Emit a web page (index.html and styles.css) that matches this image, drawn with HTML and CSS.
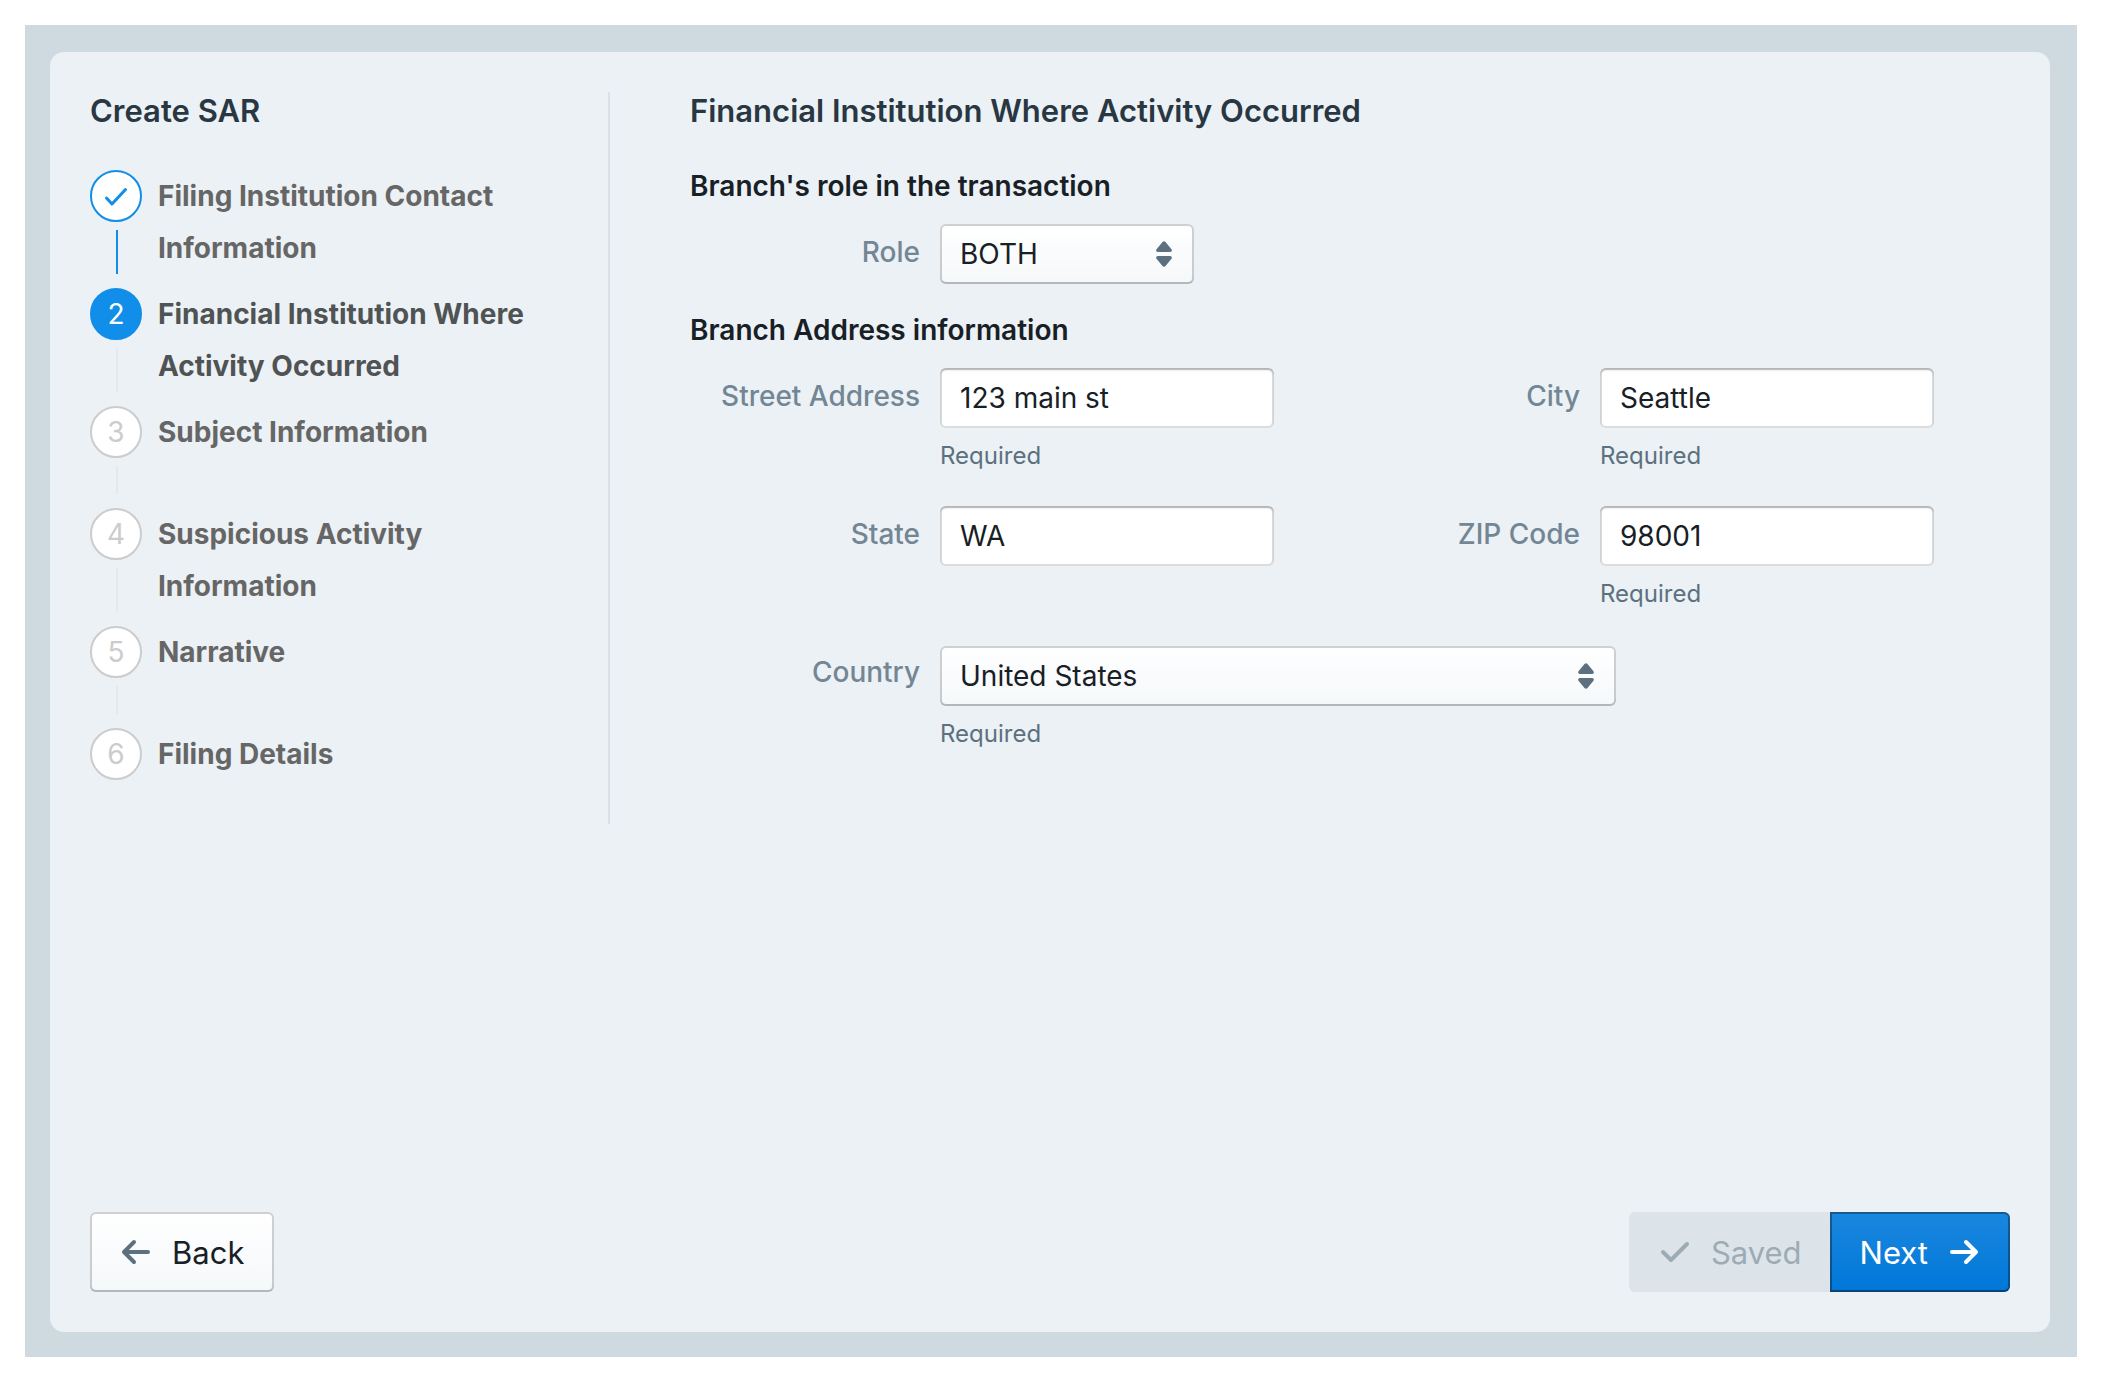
FILE: index.html
```html
<!DOCTYPE html>
<html lang="en">
<head>
<meta charset="utf-8">
<title>Create SAR</title>
<link rel="stylesheet" href="styles.css">
</head>
<body>
<div class="frame">
	<form class="panel">
		<div class="content">
			<aside class="sidebar">
				<h1 class="title">Create SAR</h1>
				<ol class="steps">
					<li class="step done">
						<span class="step-icon">
							<svg width="24" height="24" viewBox="0 0 24 24"><path d="M2.500 14l5.500 6L21.500 5.500"/></svg>
						</span>
						<span class="step-label">Filing Institution Contact Information</span>
					</li>
					<li class="step active">
						<span class="step-icon">2</span>
						<span class="step-label">Financial Institution Where Activity Occurred</span>
					</li>
					<li class="step">
						<span class="step-icon">3</span>
						<span class="step-label">Subject Information</span>
					</li>
					<li class="step">
						<span class="step-icon">4</span>
						<span class="step-label">Suspicious Activity Information</span>
					</li>
					<li class="step">
						<span class="step-icon">5</span>
						<span class="step-label">Narrative</span>
					</li>
					<li class="step">
						<span class="step-icon">6</span>
						<span class="step-label">Filing Details</span>
					</li>
				</ol>
			</aside>
			<main class="main">
				<h2 class="title">Financial Institution Where Activity Occurred</h2>
				<h3 class="subtitle">Branch's role in the transaction</h3>
				<div class="fields">
					<div class="field">
						<label for="role">Role</label>
						<div class="control">
							<div class="select role">
								<select id="role">
									<option>BOTH</option>
								</select>
								<svg width="32" height="32" viewBox="0 0 32 32"><path d="M10 14h12c1.600 0 2.400-1.600 1.500-2.800l-6-7.200c-.8-1-2.200-1-3 0l-6 7.200C7.600 12.400 8.400 14 10 14zM10 18h12c1.600 0 2.400 1.600 1.500 2.800l-6 7.200c-.8 1-2.200 1-3 0l-6-7.200C7.600 19.600 8.400 18 10 18z"/></svg>
							</div>
						</div>
					</div>
				</div>
				<h3 class="subtitle">Branch Address information</h3>
				<div class="fields">
					<div class="field">
						<label for="street">Street Address</label>
						<div class="control">
							<input type="text" id="street" value="123 main st">
							<p class="helper">Required</p>
						</div>
					</div>
					<div class="field">
						<label for="city">City</label>
						<div class="control">
							<input type="text" id="city" value="Seattle">
							<p class="helper">Required</p>
						</div>
					</div>
					<div class="field">
						<label for="state">State</label>
						<div class="control">
							<input type="text" id="state" value="WA">
						</div>
					</div>
					<div class="field">
						<label for="zip">ZIP Code</label>
						<div class="control">
							<input type="text" id="zip" value="98001">
							<p class="helper">Required</p>
						</div>
					</div>
					<div class="field wide">
						<label for="country">Country</label>
						<div class="control">
							<div class="select country">
								<select id="country">
									<option>United States</option>
								</select>
								<svg width="32" height="32" viewBox="0 0 32 32"><path d="M10 14h12c1.600 0 2.400-1.600 1.500-2.800l-6-7.200c-.8-1-2.200-1-3 0l-6 7.200C7.600 12.400 8.400 14 10 14zM10 18h12c1.600 0 2.400 1.600 1.500 2.800l-6 7.200c-.8 1-2.200 1-3 0l-6-7.200C7.600 19.600 8.400 18 10 18z"/></svg>
							</div>
							<p class="helper">Required</p>
						</div>
					</div>
				</div>
			</main>
		</div>
		<footer class="footer">
			<button type="button" class="btn">
				<svg width="32" height="32" viewBox="0 0 32 32"><path d="M28 16H5M14 6L4 16l10 10"/></svg>
				Back
			</button>
			<div class="btn-group">
				<button type="button" class="btn" disabled>
					<svg width="32" height="32" viewBox="0 0 32 32"><path d="M4 16l8 8L28 8"/></svg>
					Saved
				</button>
				<button type="submit" class="btn primary">
					Next
					<svg width="32" height="32" viewBox="0 0 32 32"><path d="M4 16h23M18 6l10 10-10 10"/></svg>
				</button>
			</div>
		</footer>
	</form>
</div>
</body>
</html>
```
FILE: styles.css
```css
* {
	box-sizing: border-box;
	margin: 0;
	padding: 0;
}
body {
	display: flex;
	min-height: 100vh;
	padding: 25px;
	background: #fff;
	color: #182026;
	font-family: Inter, "Liberation Sans", sans-serif;
	font-size: 28px;
}
.frame {
	display: flex;
	flex: 1;
	padding: 27px 27px 25px 25px;
	background: #ced9e0;
}
.panel {
	display: flex;
	flex: 1;
	flex-direction: column;
	justify-content: space-between;
	padding: 40px;
	border-radius: 14px;
	background: #ebf1f5;
}
.content {
	display: flex;
	align-items: flex-start;
}
.title {
	margin-bottom: 38px;
	color: #293742;
	font-size: 31px;
	font-weight: 600;
	line-height: 38px;
}

/* steps */
.sidebar {
	flex: none;
	width: 520px;
	padding: 0 70px 8px 0;
	border-right: 2px solid #d8e1e8;
}
.sidebar .title {
	margin-bottom: 40px;
}
.steps {
	display: grid;
	gap: 14px;
	list-style: none;
}
.step {
	position: relative;
	display: flex;
	gap: 16px;
	min-height: 88px;
	color: #666;
	line-height: 52px;
}
.step:not(:last-child)::after {
	content: "";
	position: absolute;
	top: 60px;
	bottom: 0;
	left: 26px;
	width: 2px;
	background: #e8e8e8;
}
.step-icon {
	display: flex;
	flex: none;
	align-items: center;
	justify-content: center;
	width: 52px;
	height: 52px;
	border: 2px solid #ccc;
	border-radius: 50%;
	background: #fff;
	color: #ccc;
}
.step-icon svg {
	fill: none;
	stroke: #108ee9;
	stroke-width: 3;
	stroke-linecap: round;
	stroke-linejoin: round;
}
.step-label {
	font-weight: 700;
}
.step.done .step-icon {
	border-color: #108ee9;
}
.step.done::after {
	background: #108ee9;
}
.step.active {
	color: #505354;
}
.step.active .step-icon {
	border-color: #108ee9;
	background: #108ee9;
	color: #fff;
}

/* form */
.main {
	flex: 1;
	padding-left: 80px;
}
.subtitle {
	margin-bottom: 20px;
	font-size: 28px;
	font-weight: 600;
	line-height: 36px;
}
.fields {
	display: grid;
	grid-template-columns: 1fr 1fr;
	row-gap: 32px;
	margin-bottom: 28px;
}
.field {
	display: flex;
	gap: 20px;
}
.field.wide {
	grid-column: 1 / -1;
}
.field label {
	flex: none;
	width: 230px;
	color: #738694;
	font-weight: 500;
	line-height: 56px;
	text-align: right;
}
.field input,
.field select {
	display: block;
	width: 334px;
	height: 60px;
	padding: 0 20px;
	border: 0;
	border-radius: 6px;
	color: #182026;
	font: inherit;
}
.field input {
	background: #fff;
	box-shadow: inset 0 0 0 2px rgba(16, 22, 26, .15), inset 0 2px 2px rgba(16, 22, 26, .2);
}
.select {
	position: relative;
}
.select.role {
	width: 254px;
}
.select.country {
	width: 676px;
	margin-top: 2px;
}
.field select {
	width: 100%;
	appearance: none;
}
.field select,
.btn {
	background: linear-gradient(#fff, #f5f8fa);
	box-shadow: inset 0 0 0 2px rgba(16, 22, 26, .2), inset 0 -2px 0 rgba(16, 22, 26, .1);
}
.select svg {
	position: absolute;
	top: 14px;
	right: 14px;
	fill: #5c7080;
	pointer-events: none;
}
.helper {
	margin-top: 10px;
	color: #5c7080;
	font-size: 24px;
	line-height: 36px;
}

/* buttons */
.footer {
	display: flex;
	justify-content: space-between;
}
.btn-group {
	display: flex;
}
.btn-group .btn:not(:last-child) {
	margin-right: -2px;
}
.btn {
	display: flex;
	align-items: center;
	gap: 20px;
	height: 80px;
	padding: 0 30px;
	border: 0;
	border-radius: 6px;
	color: #182026;
	font: inherit;
	font-size: 31px;
}
.btn svg {
	fill: none;
	stroke: #5c7080;
	stroke-width: 4;
	stroke-linecap: round;
	stroke-linejoin: round;
}
.btn:disabled {
	border-radius: 6px 0 0 6px;
	background: #dce4ea;
	box-shadow: none;
	color: #9dabb5;
}
.btn:disabled svg {
	stroke: #9dabb5;
}
.btn.primary {
	border-radius: 0 6px 6px 0;
	background: linear-gradient(#1b87de, #0077d9);
	box-shadow: inset 0 0 0 2px rgba(16, 22, 26, .4), inset 0 -2px 0 rgba(16, 22, 26, .2);
	color: #fff;
}
.btn.primary svg {
	stroke: #fff;
}
```
